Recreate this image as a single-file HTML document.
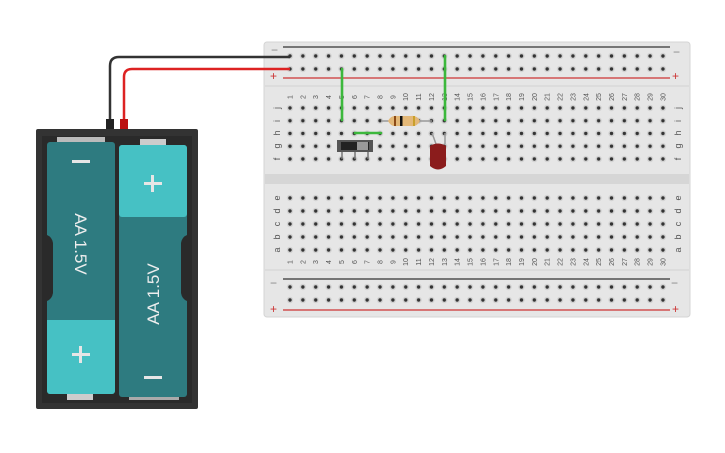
<!DOCTYPE html><html><head><style>body{margin:0;background:#fff}svg{display:block}text{font-family:"Liberation Sans",sans-serif}</style></head><body>
<svg width="725" height="453" viewBox="0 0 725 453" xmlns="http://www.w3.org/2000/svg">
<defs>
<pattern id="p1" patternUnits="userSpaceOnUse" x="283.57" y="49.5" width="12.86" height="13"><circle cx="6.43" cy="6.5" r="3.2" fill="#d2d2d2"/><circle cx="6.43" cy="6.5" r="1.7" fill="#333"/></pattern>
<pattern id="p2" patternUnits="userSpaceOnUse" x="283.57" y="101.6" width="12.86" height="12.75"><circle cx="6.43" cy="6.4" r="3.2" fill="#d2d2d2"/><circle cx="6.43" cy="6.4" r="1.7" fill="#333"/></pattern>
<pattern id="p3" patternUnits="userSpaceOnUse" x="283.57" y="191.5" width="12.86" height="13"><circle cx="6.43" cy="6.5" r="3.2" fill="#d2d2d2"/><circle cx="6.43" cy="6.5" r="1.7" fill="#333"/></pattern>
<pattern id="p4" patternUnits="userSpaceOnUse" x="283.57" y="280.5" width="12.86" height="13"><circle cx="6.43" cy="6.5" r="3.2" fill="#d2d2d2"/><circle cx="6.43" cy="6.5" r="1.7" fill="#333"/></pattern>
</defs>
<rect x="264" y="42" width="426" height="275" rx="3" fill="#e6e6e6" stroke="#d4d4d4"/>
<rect x="265" y="174" width="424" height="10" fill="#d6d6d6"/>
<line x1="265" y1="86" x2="689" y2="86" stroke="#d2d2d2"/>
<line x1="265" y1="270" x2="689" y2="270" stroke="#d2d2d2"/>
<line x1="283" y1="47" x2="670" y2="47" stroke="#333" stroke-width="1.3"/>
<line x1="283" y1="78" x2="670" y2="78" stroke="#c33" stroke-width="1.3"/>
<line x1="283" y1="279" x2="670" y2="279" stroke="#333" stroke-width="1.3"/>
<line x1="283" y1="310" x2="670" y2="310" stroke="#c33" stroke-width="1.3"/>
<rect x="283.57" y="49.5" width="385.8" height="26" fill="url(#p1)"/>
<rect x="283.57" y="101.6" width="385.8" height="63.75" fill="url(#p2)"/>
<rect x="283.57" y="191.5" width="385.8" height="65" fill="url(#p3)"/>
<rect x="283.57" y="280.5" width="385.8" height="26" fill="url(#p4)"/>
<g font-size="12" fill="#888"><text x="271" y="54">−</text><text x="673" y="56">−</text><text x="671" y="287">−</text><text x="270" y="287">−</text></g>
<g font-size="12" fill="#c33"><text x="270" y="80">+</text><text x="672" y="80">+</text><text x="270" y="313">+</text><text x="672" y="313">+</text></g>
<g transform="rotate(-90)" font-size="7" fill="#555" text-anchor="middle">
<text x="-97" y="292.5">1</text><text x="-97" y="305.4">2</text><text x="-97" y="318.2">3</text><text x="-97" y="331.1">4</text><text x="-97" y="343.9">5</text><text x="-97" y="356.8">6</text><text x="-97" y="369.7">7</text><text x="-97" y="382.5">8</text><text x="-97" y="395.4">9</text><text x="-97" y="408.2">10</text><text x="-97" y="421.1">11</text><text x="-97" y="434">12</text><text x="-97" y="446.8">13</text><text x="-97" y="459.7">14</text><text x="-97" y="472.5">15</text><text x="-97" y="485.4">16</text><text x="-97" y="498.3">17</text><text x="-97" y="511.1">18</text><text x="-97" y="524">19</text><text x="-97" y="536.8">20</text><text x="-97" y="549.7">21</text><text x="-97" y="562.6">22</text><text x="-97" y="575.4">23</text><text x="-97" y="588.3">24</text><text x="-97" y="601.1">25</text><text x="-97" y="614">26</text><text x="-97" y="626.9">27</text><text x="-97" y="639.7">28</text><text x="-97" y="652.6">29</text><text x="-97" y="665.4">30</text>
<text x="-262" y="292.5">1</text><text x="-262" y="305.4">2</text><text x="-262" y="318.2">3</text><text x="-262" y="331.1">4</text><text x="-262" y="343.9">5</text><text x="-262" y="356.8">6</text><text x="-262" y="369.7">7</text><text x="-262" y="382.5">8</text><text x="-262" y="395.4">9</text><text x="-262" y="408.2">10</text><text x="-262" y="421.1">11</text><text x="-262" y="434">12</text><text x="-262" y="446.8">13</text><text x="-262" y="459.7">14</text><text x="-262" y="472.5">15</text><text x="-262" y="485.4">16</text><text x="-262" y="498.3">17</text><text x="-262" y="511.1">18</text><text x="-262" y="524">19</text><text x="-262" y="536.8">20</text><text x="-262" y="549.7">21</text><text x="-262" y="562.6">22</text><text x="-262" y="575.4">23</text><text x="-262" y="588.3">24</text><text x="-262" y="601.1">25</text><text x="-262" y="614">26</text><text x="-262" y="626.9">27</text><text x="-262" y="639.7">28</text><text x="-262" y="652.6">29</text><text x="-262" y="665.4">30</text>
</g>
<g transform="rotate(-90)" font-size="9" fill="#555" text-anchor="middle">
<text x="-108" y="280">j</text><text x="-121" y="280">i</text><text x="-133" y="280">h</text><text x="-146" y="280">g</text><text x="-159" y="280">f</text>
<text x="-108" y="681">j</text><text x="-121" y="681">i</text><text x="-133" y="681">h</text><text x="-146" y="681">g</text><text x="-159" y="681">f</text>
<text x="-198" y="280">e</text><text x="-211" y="280">d</text><text x="-224" y="280">c</text><text x="-237" y="280">b</text><text x="-250" y="280">a</text>
<text x="-198" y="681">e</text><text x="-211" y="681">d</text><text x="-224" y="681">c</text><text x="-237" y="681">b</text><text x="-250" y="681">a</text>
</g>
<!-- wires from battery -->
<path d="M110 128 V66 Q110 57 119 57 H290" fill="none" stroke="#333" stroke-width="2.5"/>
<path d="M124 128 V77 Q124 69 132 69 H290" fill="none" stroke="#d22" stroke-width="2.5"/>
<rect x="106" y="119" width="8" height="10" fill="#222"/><rect x="120" y="119" width="8" height="10" fill="#b11"/>
<!-- green wires -->
<g stroke="#3cb83c" stroke-width="2.6" stroke-linecap="round"><line x1="342" y1="69" x2="342" y2="120"/><line x1="445" y1="56" x2="445" y2="120"/><line x1="355" y1="133" x2="381" y2="133"/></g>
<!-- switch -->
<g stroke="#777" stroke-width="1.5"><line x1="342" y1="150" x2="342" y2="159"/><line x1="355" y1="150" x2="355" y2="159"/><line x1="368" y1="150" x2="368" y2="159"/></g>
<rect x="337" y="140" width="36" height="12" fill="#555"/><rect x="341" y="142" width="28" height="8" fill="#222"/><rect x="357" y="142" width="11" height="8" fill="#999"/>
<!-- resistor -->
<line x1="381" y1="121" x2="432" y2="121" stroke="#999" stroke-width="1.5"/>
<path d="M388 121 Q391 115 397 116 H411 Q417 115 420 121 Q417 127 411 126 H397 Q391 127 388 121Z" fill="#e3b878"/>
<rect x="394" y="116" width="2" height="10" fill="#8b4a16"/><rect x="400" y="116" width="2.5" height="10" fill="#111"/><rect x="413" y="116" width="2" height="10" fill="#c9a02a"/>
<!-- LED -->
<g stroke="#999" stroke-width="1.5" fill="none"><path d="M432 133 L436 144"/><path d="M445 133 V144"/></g>
<path d="M430 146 Q438 141 446 146 V166 Q438 173 430 166Z" fill="#8b1c1c"/>
<!-- battery -->
<rect x="36" y="129" width="162" height="280" rx="2" fill="#333"/>
<rect x="42" y="136" width="150" height="267" fill="#2a2a2a"/>
<rect x="57" y="137" width="48" height="6" fill="#bbb"/><rect x="140" y="139" width="26" height="7" fill="#ccc"/>
<rect x="67" y="393" width="26" height="7" fill="#ccc"/><rect x="129" y="396" width="50" height="4" fill="#aaa"/>
<rect x="47" y="142" width="68" height="252" rx="3" fill="#2e7b80"/>
<rect x="47" y="320" width="68" height="74" rx="3" fill="#46c1c4"/><rect x="47" y="320" width="68" height="4" fill="#46c1c4"/>
<rect x="119" y="145" width="68" height="252" rx="3" fill="#2e7b80"/>
<rect x="119" y="145" width="68" height="72" rx="3" fill="#46c1c4"/>
<path d="M47 235 q5 2 6 8 v50 q-1 6 -6 8z" fill="#2a2a2a"/>
<path d="M187 235 q-5 2 -6 8 v50 q1 6 6 8z" fill="#2a2a2a"/>
<g fill="#e6e6e6"><rect x="72" y="160" width="18" height="3"/><rect x="72" y="353" width="18" height="3"/><rect x="79" y="346" width="3" height="17"/><rect x="144" y="182" width="18" height="3"/><rect x="151" y="175" width="3" height="17"/><rect x="144" y="376" width="18" height="3"/></g>
<text transform="translate(75,244) rotate(90)" font-size="17" fill="#eee" text-anchor="middle">AA 1.5V</text>
<text transform="translate(159,294) rotate(-90)" font-size="17" fill="#eee" text-anchor="middle">AA 1.5V</text>
</svg>
</body></html>
